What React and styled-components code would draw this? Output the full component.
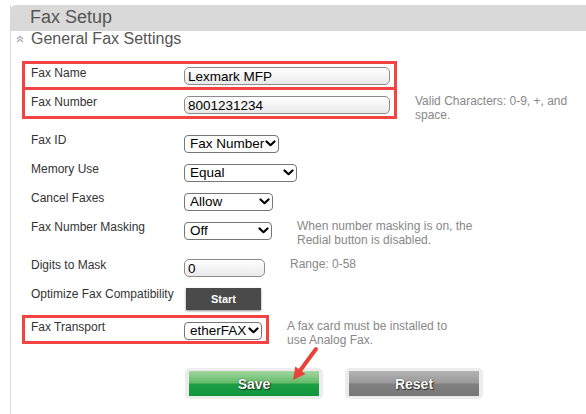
import React from 'react';
import styled, { createGlobalStyle } from 'styled-components';

const GlobalStyle = createGlobalStyle`
  body {
    margin: 0;
    background: #fff;
    font-family: "Liberation Sans", Arial, sans-serif;
  }
`;

const red = '#f44343';

const Page = styled.div`
  position: relative;
  box-sizing: border-box;
  width: 586px;
  height: 414px;
  padding: 5px 0 0 10px;
  overflow: hidden;
`;

const Panel = styled.div`
  height: 100%;
  border-left: 1px solid #d6d6d6;
`;

const Header = styled.div`
  margin-left: -1px;
  height: 26px;
  padding-left: 20px;
  background: #d9d9d9;
  border-top-left-radius: 6px;
  color: #555;
  font-size: 18px;
  line-height: 24px;
`;

const SectionTitle = styled.div`
  display: flex;
  align-items: center;
  gap: 7px;
  padding-left: 5px;
  color: #555;
  font-size: 16px;
  line-height: 16px;
`;

const Form = styled.div`
  margin: 14px 0 0 11px;
`;

const Row = styled.div`
  display: flex;
  align-items: flex-start;
`;

const Field = styled.div`
  display: flex;
  align-items: flex-start;
  border: 3px solid ${p => (p.$boxed ? red : 'transparent')};
  padding: 3px 4px 2px 6px;
  ${p => p.$joined && 'border-top-width: 0; padding-top: 6px;'}
`;

const Label = styled.div`
  flex: none;
  width: 153px;
  margin-top: -1px;
  color: #333;
  font-size: 12px;
  line-height: 14px;
  white-space: nowrap;
`;

const Hint = styled.div`
  margin: 4px 0 6px 18px;
  color: #888;
  font-size: 12px;
  line-height: 14px;
  width: ${p => p.$w || 170}px;
`;

const TextInput = styled.input`
  box-sizing: border-box;
  width: ${p => p.$w}px;
  height: 18px;
  margin: 0;
  padding: 0 3px;
  border: 1px solid #8c8c8c;
  border-radius: 5px;
  background: linear-gradient(#ffffff, #e9e9e9);
  color: #000;
  font: 13.5px "Liberation Sans", Arial, sans-serif;
  outline: none;
`;

const SelectBox = styled.div`
  position: relative;
  width: ${p => p.$w}px;
  height: 18px;
`;

const Select = styled.select`
  appearance: none;
  box-sizing: border-box;
  width: 100%;
  height: 18px;
  margin: 0;
  padding: 0 0 0 5px;
  border: 1px solid #767676;
  border-radius: 4px;
  background: #fff;
  color: #000;
  font: 13.5px "Liberation Sans", Arial, sans-serif;
  line-height: 16px;
`;

const Chevron = styled.svg`
  position: absolute;
  right: 3px;
  top: 6px;
  pointer-events: none;
`;

const StartButton = styled.button`
  width: 75px;
  height: 22px;
  margin-left: 2px;
  border: none;
  background: #4a4a4a;
  box-shadow: 0 1px 2px rgba(0, 0, 0, 0.45);
  color: #fff;
  font: bold 11px "Liberation Sans", Arial, sans-serif;
`;

const Buttons = styled.div`
  display: flex;
  gap: 22px;
  margin: 15px 0 0 163px;
`;

const ButtonFrame = styled.div`
  display: flex;
  padding: 3px 4px;
  background: #ececec;
  border-radius: 5px;
`;

const gradients = {
  save: 'linear-gradient(#a4d6a1 0%, #62bb68 48%, #1f9e44 52%, #0e953c 100%)',
  reset: 'linear-gradient(#b3b3b3 0%, #9a9a9a 48%, #808080 52%, #777 100%)',
};

const ActionButton = styled.button`
  width: 130px;
  height: 25px;
  border: none;
  background: ${p => gradients[p.$kind]};
  color: #fff;
  font: bold 14px "Liberation Sans", Arial, sans-serif;
  text-shadow: 0 0 1px #000, 1px 1px 1px rgba(0, 0, 0, 0.6);
`;

const Arrow = styled.svg`
  position: absolute;
  left: 280px;
  top: 340px;
`;

function ChevronsUp() {
  return (
    <svg width="8" height="8" viewBox="0 0 8 8" fill="none" stroke="#aaa" strokeWidth="1.2">
      <path d="M1 4 L4 1.2 L7 4" />
      <path d="M1 7 L4 4.2 L7 7" />
    </svg>
  );
}

function Dropdown({ width, value, options }) {
  return (
    <SelectBox $w={width}>
      <Select defaultValue={value}>
        {options.map(o => (
          <option key={o}>{o}</option>
        ))}
      </Select>
      <Chevron width="11" height="7" viewBox="0 0 11 7" fill="none" stroke="#000" strokeWidth="2.2" strokeLinecap="round" strokeLinejoin="round">
        <path d="M1.5 1.5 L5.5 5.2 L9.5 1.5" />
      </Chevron>
    </SelectBox>
  );
}

export default function App() {
  return (
    <Page>
      <GlobalStyle />
      <Panel>
        <Header>Fax Setup</Header>
        <SectionTitle>
          <ChevronsUp />
          General Fax Settings
        </SectionTitle>
        <Form>
          <Row>
            <Field $boxed>
              <Label>Fax Name</Label>
              <TextInput $w={206} defaultValue="Lexmark MFP" />
            </Field>
          </Row>
          <Row>
            <Field $boxed $joined>
              <Label>Fax Number</Label>
              <TextInput $w={206} defaultValue="8001231234" />
            </Field>
            <Hint $w={180}>Valid Characters: 0-9, +, and space.</Hint>
          </Row>
          <Row>
            <Field>
              <Label>Fax ID</Label>
              <Dropdown width={95} value="Fax Number" options={['Fax Number', 'Station Name']} />
            </Field>
          </Row>
          <Row>
            <Field>
              <Label>Memory Use</Label>
              <Dropdown width={113} value="Equal" options={['Equal', 'All Receive', 'All Send']} />
            </Field>
          </Row>
          <Row>
            <Field>
              <Label>Cancel Faxes</Label>
              <Dropdown width={89} value="Allow" options={['Allow', "Don't Allow"]} />
            </Field>
          </Row>
          <Row>
            <Field>
              <Label>Fax Number Masking</Label>
              <Dropdown width={88} value="Off" options={['Off', 'From Left', 'From Right']} />
            </Field>
            <Hint $w={190}>When number masking is on, the Redial button is disabled.</Hint>
          </Row>
          <Row>
            <Field>
              <Label>Digits to Mask</Label>
              <TextInput $w={81} defaultValue="0" />
            </Field>
            <Hint>Range: 0-58</Hint>
          </Row>
          <Row>
            <Field>
              <Label>Optimize Fax Compatibility</Label>
              <StartButton>Start</StartButton>
            </Field>
          </Row>
          <Row>
            <Field $boxed>
              <Label>Fax Transport</Label>
              <Dropdown width={78} value="etherFAX" options={['etherFAX', 'Analog']} />
            </Field>
            <Hint>A fax card must be installed to use Analog Fax.</Hint>
          </Row>
          <Buttons>
            <ButtonFrame>
              <ActionButton $kind="save">Save</ActionButton>
            </ButtonFrame>
            <ButtonFrame>
              <ActionButton $kind="reset">Reset</ActionButton>
            </ButtonFrame>
          </Buttons>
        </Form>
      </Panel>
      <Arrow width="44" height="48" viewBox="0 0 44 48">
        <line x1="36" y1="9" x2="20.5" y2="30" stroke="#e8423a" strokeWidth="4" strokeLinecap="round" />
        <polygon points="13,40 25.5,34 15.3,26.5" fill="#e8423a" />
      </Arrow>
    </Page>
  );
}
